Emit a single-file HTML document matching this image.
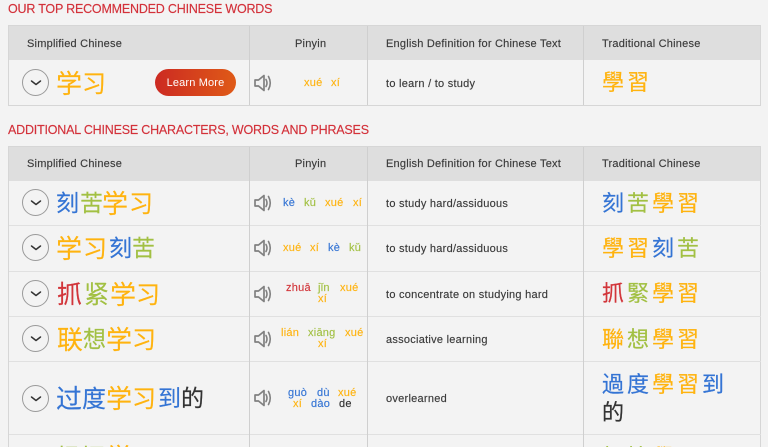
<!DOCTYPE html>
<html lang="zh"><head><meta charset="utf-8"><title>Chinese Words</title>
<style>
*{box-sizing:border-box;margin:0;padding:0}
html,body{width:768px;height:447px;overflow:hidden;background:#f3f3f3}
body{position:relative;font-family:"Liberation Sans","Noto Sans CJK SC",sans-serif;color:#3a3a3a}
.a{position:absolute;white-space:nowrap}
.h2{left:8px;font:12.5px/16px "Liberation Sans",sans-serif;color:#d3313a;letter-spacing:-.2px;-webkit-text-stroke:.15px currentColor}
.hb{position:absolute;left:8px;width:753px;height:35px;background:#dedede;border:1px solid #d2d2d2;border-bottom:0}
.ln{position:absolute;left:9px;width:752px;height:1px;background:#e0e0e0}
.v{position:absolute;width:1px;background:#cfcfcf}
.th{font:11px/14px "Liberation Sans",sans-serif;color:#3a3a3a;letter-spacing:.22px;-webkit-text-stroke:.15px currentColor}
.td{font:11px/14px "Liberation Sans",sans-serif;color:#3a3a3a;letter-spacing:.26px;left:386px;-webkit-text-stroke:.15px currentColor}
.c{position:absolute;left:22px;width:27px;height:27px;border:1px solid #9a9a9a;border-radius:50%}
.c svg{position:absolute;left:7px;top:9px}
.sp{position:absolute;left:254px}
.z{font:26px/30px "Noto Sans CJK SC",sans-serif;left:56px}
.z span{display:inline-block;position:relative;-webkit-text-stroke:.15px currentColor}
.f23{font-size:23px;top:-2px}.f24{font-size:24px;top:-1.500px}.f25{font-size:25px;top:-1px}
.t{font:400 22px/30px "Noto Sans CJK TC",sans-serif;left:602px;letter-spacing:3px;-webkit-text-stroke:.2px currentColor}
.p{font:11px/11px "Liberation Sans",sans-serif;letter-spacing:.25px;-webkit-text-stroke:.15px currentColor}
.y{color:#ffb30f}.g{color:#a2c043}.b{color:#3474d4}.r{color:#d2353a}.k{color:#333}
.btn{position:absolute;left:155px;top:69px;width:81px;height:27px;border-radius:14px;background:linear-gradient(90deg,#cc2a22,#df5a17);color:#fff;font:11px/29px "Liberation Sans",sans-serif;text-align:center;letter-spacing:.15px}
.clip{position:absolute;left:0;top:435px;width:768px;height:12px;overflow:hidden}
</style></head><body>
<svg width="0" height="0" style="position:absolute"><defs>
<symbol id="s" viewBox="0 0 18 20"><path d="M1 7h3.500L10 2.500v15L4.500 13H1z" fill="#f1f1f1" stroke="#808080" stroke-width="1.700" stroke-linejoin="round"/><path d="M12 6.500q2 3.500 0 7M14.500 3.500q3.500 6.500 0 13" fill="none" stroke="#808080" stroke-width="1.600" stroke-linecap="round"/></symbol>
<symbol id="d" viewBox="0 0 12 8"><path d="M1.500 2l4.500 3.500L10.500 2" fill="none" stroke="#333" stroke-width="1.500" stroke-linecap="round" stroke-linejoin="round"/></symbol>
</defs></svg>

<div class="a h2" style="top:1px">OUR TOP RECOMMENDED CHINESE WORDS</div>
<div class="hb" style="top:25px"></div>
<div class="a" style="left:8px;top:25px;width:753px;height:81px;border:1px solid #d6d6d6"></div>
<div class="v" style="left:249px;top:26px;height:79px"></div>
<div class="v" style="left:367px;top:26px;height:79px"></div>
<div class="v" style="left:583px;top:26px;height:79px"></div>
<div class="a th" style="left:27px;top:37px">Simplified Chinese</div>
<div class="a th" style="left:295px;top:37px">Pinyin</div>
<div class="a th" style="left:386px;top:37px">English Definition for Chinese Text</div>
<div class="a th" style="left:602px;top:37px">Traditional Chinese</div>
<div class="c" style="top:69px"><svg width="12" height="8"><use href="#d"/></svg></div>
<div class="a z" style="top:68px"><span class="y" style="width:26px">学</span><span class="y f24" style="width:26px">习</span></div>
<div class="btn">Learn More</div>
<svg class="sp" style="top:73px" width="18" height="20"><use href="#s"/></svg>
<div class="a p y" style="left:304px;top:78px">xué</div><div class="a p y" style="left:331px;top:78px">xí</div>
<div class="a td" style="top:77px">to learn / to study</div>
<div class="a t y" style="top:66px">學習</div>

<div class="a h2" style="top:122px">ADDITIONAL CHINESE CHARACTERS, WORDS AND PHRASES</div>
<div class="hb" style="top:146px"></div>
<div class="a" style="left:8px;top:146px;width:753px;height:301px;border:1px solid #d6d6d6;border-bottom:0"></div>
<div class="ln" style="top:225px"></div><div class="ln" style="top:271px"></div><div class="ln" style="top:316px"></div><div class="ln" style="top:361px"></div><div class="ln" style="top:434px"></div>
<div class="v" style="left:249px;top:147px;height:300px"></div>
<div class="v" style="left:367px;top:147px;height:300px"></div>
<div class="v" style="left:583px;top:147px;height:300px"></div>
<div class="a th" style="left:27px;top:157px">Simplified Chinese</div>
<div class="a th" style="left:295px;top:157px">Pinyin</div>
<div class="a th" style="left:386px;top:157px">English Definition for Chinese Text</div>
<div class="a th" style="left:602px;top:157px">Traditional Chinese</div>

<div class="c" style="top:189px"><svg width="12" height="8"><use href="#d"/></svg></div>
<div class="a z" style="top:188px"><span class="b f23" style="width:24px">刻</span><span class="g f23" style="width:22px">苦</span><span class="y" style="width:27px">学</span><span class="y f24" style="width:26px">习</span></div>
<svg class="sp" style="top:193px" width="18" height="20"><use href="#s"/></svg>
<div class="a p b" style="left:283px;top:198px">kè</div><div class="a p g" style="left:304px;top:198px">kǔ</div><div class="a p y" style="left:325px;top:198px">xué</div><div class="a p y" style="left:353px;top:198px">xí</div>
<div class="a td" style="top:197px">to study hard/assiduous</div>
<div class="a t" style="top:187px"><span class="b">刻</span><span class="g">苦</span><span class="y">學習</span></div>

<div class="c" style="top:234px"><svg width="12" height="8"><use href="#d"/></svg></div>
<div class="a z" style="top:233px"><span class="y" style="width:27px">学</span><span class="y f24" style="width:26px">习</span><span class="b f23" style="width:23px">刻</span><span class="g f23" style="width:24px">苦</span></div>
<svg class="sp" style="top:238px" width="18" height="20"><use href="#s"/></svg>
<div class="a p y" style="left:283px;top:243px">xué</div><div class="a p y" style="left:310px;top:243px">xí</div><div class="a p b" style="left:328px;top:243px">kè</div><div class="a p g" style="left:349px;top:243px">kǔ</div>
<div class="a td" style="top:242px">to study hard/assiduous</div>
<div class="a t" style="top:232px"><span class="y">學習</span><span class="b">刻</span><span class="g">苦</span></div>

<div class="c" style="top:280px"><svg width="12" height="8"><use href="#d"/></svg></div>
<div class="a z" style="top:279px;left:57px"><span class="r f25" style="width:27px">抓</span><span class="g f25" style="width:26px">紧</span><span class="y" style="width:26px">学</span><span class="y f24" style="width:26px">习</span></div>
<svg class="sp" style="top:284px" width="18" height="20"><use href="#s"/></svg>
<div class="a p r" style="left:286px;top:283px">zhuā</div><div class="a p g" style="left:318px;top:283px">jǐn</div><div class="a p y" style="left:340px;top:283px">xué</div><div class="a p y" style="left:318px;top:294px">xí</div>
<div class="a td" style="top:288px">to concentrate on studying hard</div>
<div class="a t" style="top:277px"><span class="r">抓</span><span class="g">緊</span><span class="y">學習</span></div>

<div class="c" style="top:325px"><svg width="12" height="8"><use href="#d"/></svg></div>
<div class="a z" style="top:324px;left:57px"><span class="y" style="width:26px">联</span><span class="g f23" style="width:23px">想</span><span class="y" style="width:26px">学</span><span class="y f24" style="width:26px">习</span></div>
<svg class="sp" style="top:329px" width="18" height="20"><use href="#s"/></svg>
<div class="a p y" style="left:281px;top:328px">lián</div><div class="a p g" style="left:308px;top:328px">xiāng</div><div class="a p y" style="left:345px;top:328px">xué</div><div class="a p y" style="left:318px;top:339px">xí</div>
<div class="a td" style="top:333px">associative learning</div>
<div class="a t" style="top:323px"><span class="y">聯</span><span class="g">想</span><span class="y">學習</span></div>

<div class="c" style="top:385px"><svg width="12" height="8"><use href="#d"/></svg></div>
<div class="a z" style="top:383px"><span class="b" style="width:26px">过</span><span class="b f24" style="width:24px">度</span><span class="y" style="width:26px">学</span><span class="y f24" style="width:26px">习</span><span class="b f23" style="width:23px">到</span><span class="k f23" style="width:24px">的</span></div>
<svg class="sp" style="top:388px" width="18" height="20"><use href="#s"/></svg>
<div class="a p b" style="left:288px;top:388px">guò</div><div class="a p b" style="left:317px;top:388px">dù</div><div class="a p y" style="left:338px;top:388px">xué</div>
<div class="a p y" style="left:293px;top:399px">xí</div><div class="a p b" style="left:311px;top:399px">dào</div><div class="a p k" style="left:339px;top:399px">de</div>
<div class="a td" style="top:392px">overlearned</div>
<div class="a t" style="top:368px"><span class="b">過度</span><span class="y">學習</span><span class="b">到</span></div>
<div class="a t k" style="top:396px">的</div>

<div class="clip"><div class="a z" style="top:7px"><span class="g f24" style="width:25px">根</span><span class="g f24" style="width:25px">据</span><span class="y" style="width:26px">学</span><span class="y f24" style="width:26px">习</span></div>
<div class="a t" style="top:6px"><span class="g">根據</span><span class="y">學習</span></div></div>
</body></html>
